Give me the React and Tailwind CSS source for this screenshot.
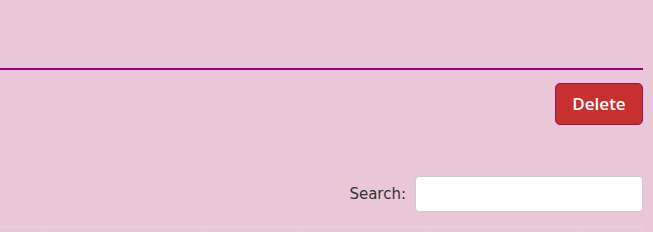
import React from 'react';

const columns = [42, 161, 95, 131, 150, 64];

export default function App() {
    return (
        <div className="min-h-screen bg-[#e9c6d8] pr-[10px] overflow-hidden" style={{ fontFamily: '"DejaVu Sans", sans-serif' }}>
            <div className="h-[70px] border-b-2 border-[#990080]" />

            <div className="flex justify-end mt-[13px]">
                <button className="w-[88px] h-[42px] rounded-[5px] bg-[#c82f2f] border border-[#9d0d6c] text-white text-[17px] font-semibold font-['Open_Sans',sans-serif]">
                    Delete
                </button>
            </div>

            <div className="flex justify-end items-center mt-[51px]">
                <label className="text-[15px] text-[#333] mr-[9px]">Search:</label>
                <input className="w-[228px] h-[36px] bg-white rounded-[4px] border border-[#ccc] outline-none" />
            </div>

            <div className="mt-[14px] border-t-2 border-[#ddd6dd] flex h-[10px]">
                {columns.map((w, i) => (
                    <div
                        key={i}
                        style={{ width: w }}
                        className={i === 0 ? '' : 'border-l border-[#ddd6dd]'}
                    />
                ))}
            </div>
        </div>
    );
}
